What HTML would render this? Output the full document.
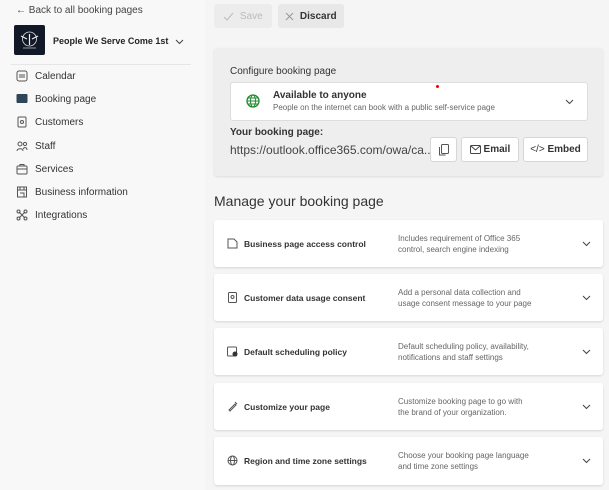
<!DOCTYPE html>
<html><head><style>
body{margin:0;width:609px;height:490px;background:#f5f5f5;font-family:"Liberation Sans",sans-serif;color:#242424;position:relative;overflow:hidden}
.a{position:absolute}
.nav{left:16px;font-size:10px;color:#333;display:flex;align-items:center}
.nav svg{width:12px;height:12px;margin-right:7px}
.btn{position:absolute;background:#e8e8e8;border-radius:3px;font-size:10px;display:flex;align-items:center;justify-content:center}
.card{position:absolute;left:214px;width:389px;background:#fff;border-radius:3px;box-shadow:0 1px 2px rgba(0,0,0,.13)}
.card .t{position:absolute;left:30px;font-size:8.5px;font-weight:bold;color:#333}
.card .d{position:absolute;left:184px;font-size:8px;color:#666;line-height:11px}
.card .ic{position:absolute;left:13px;width:11px;height:11px}
.chev{position:absolute;right:12px;width:9px;height:6px}
.wb{position:absolute;background:#fff;border:1px solid #d6d6d6;border-radius:3px;font-size:10px;font-weight:bold;display:flex;align-items:center;justify-content:center;color:#333}
</style></head><body>
<div class="a" style="left:0;top:0;width:205px;height:490px;background:#f8f8f8"></div>
<div class="a" style="left:16px;top:5px;font-size:10px;color:#444">← Back to all booking pages</div>
<div class="a" style="left:14px;top:25px;width:31px;height:30px;background:#111827;border-radius:2px">
<svg width="31" height="30" viewBox="0 0 31 30"><circle cx="15.5" cy="14" r="7" fill="none" stroke="#ddd" stroke-width="0.8"/><path d="M7 11l6 3M24 11l-6 3M15.5 9v11" stroke="#eee" stroke-width="1.2"/><path d="M9 23h13" stroke="#bbb" stroke-width="0.8"/></svg></div>
<div class="a" style="left:53px;top:36px;font-size:9px;font-weight:bold;white-space:nowrap">People We Serve Come 1st</div>
<svg class="a" style="left:175px;top:39px" width="9" height="6"><path d="M1 1l3.5 3.5L8 1" stroke="#444" fill="none"/></svg>
<div class="a" style="left:11px;top:64px;width:180px;height:1px;background:#e6e6e6"></div>
<div class="a nav" style="top:70px"><svg viewBox="0 0 12 12"><rect x="1" y="1" width="10" height="10" rx="2" fill="none" stroke="#555"/><path d="M3 5h6M3 7h6" stroke="#555"/></svg>Calendar</div>
<div class="a nav" style="top:93px"><svg viewBox="0 0 12 12"><rect x="0.5" y="1" width="11" height="9" rx="1" fill="#2f4659"/></svg>Booking page</div>
<div class="a nav" style="top:116px"><svg viewBox="0 0 12 12"><rect x="2" y="1" width="8" height="10" rx="1" fill="none" stroke="#555"/><circle cx="6" cy="6" r="1.5" fill="none" stroke="#555"/></svg>Customers</div>
<div class="a nav" style="top:140px"><svg viewBox="0 0 12 12"><circle cx="4" cy="4" r="2" fill="none" stroke="#555"/><circle cx="9" cy="4" r="1.6" fill="none" stroke="#555"/><path d="M1 11c0-3 6-3 6 0M7 9c1-2 4-2 4 1" fill="none" stroke="#555"/></svg>Staff</div>
<div class="a nav" style="top:163px"><svg viewBox="0 0 12 12"><rect x="1" y="3" width="10" height="8" rx="1" fill="none" stroke="#555"/><path d="M4 3V1.5h4V3M1 6h10" fill="none" stroke="#555"/></svg>Services</div>
<div class="a nav" style="top:186px"><svg viewBox="0 0 12 12"><rect x="1.5" y="1" width="9" height="10" fill="none" stroke="#555"/><path d="M1.5 4h9M4 1v3M8 1v3M4 7h4v4" fill="none" stroke="#555"/></svg>Business information</div>
<div class="a nav" style="top:209px"><svg viewBox="0 0 12 12"><path d="M3 3l6 6M9 3l-6 6" stroke="#555"/><circle cx="2.5" cy="2.5" r="1.5" fill="none" stroke="#555"/><circle cx="9.5" cy="2.5" r="1.5" fill="none" stroke="#555"/><circle cx="2.5" cy="9.5" r="1.5" fill="none" stroke="#555"/><circle cx="9.5" cy="9.5" r="1.5" fill="none" stroke="#555"/></svg>Integrations</div>

<div class="btn" style="left:214px;top:4px;width:58px;height:24px;background:#ececec;color:#bbb"><svg width="11" height="9"><path d="M1 5l3 3 6-7" stroke="#bbb" fill="none"/></svg>&nbsp; Save</div>
<div class="btn" style="left:278px;top:4px;width:66px;height:24px;font-weight:bold;color:#333"><svg width="9" height="9"><path d="M1 1l7 7M8 1L1 8" stroke="#999"/></svg>&nbsp; Discard</div>

<div class="a" style="left:214px;top:48px;width:389px;height:128px;background:#eeeeee;border-radius:3px;box-shadow:0 1px 2px rgba(0,0,0,.1)"></div>
<div class="a" style="left:230px;top:66px;font-size:10px;color:#333">Configure booking page</div>
<div class="a" style="left:230px;top:82px;width:356px;height:37px;background:#fff;border:1px solid #ddd;border-radius:3px"></div>
<svg class="a" style="left:246px;top:94px" width="14" height="14" viewBox="0 0 14 14"><circle cx="7" cy="7" r="6" fill="none" stroke="#1e8a2e" stroke-width="1.3"/><ellipse cx="7" cy="7" rx="2.5" ry="6" fill="none" stroke="#1e8a2e"/><path d="M1 7h12M2 4h10M2 10h10" stroke="#1e8a2e"/></svg>
<div class="a" style="left:273px;top:90px;font-size:10px;font-weight:bold;color:#333">Available to anyone</div>
<div class="a" style="left:273px;top:103px;font-size:8px;color:#666">People on the internet can book with a public self-service page</div>
<div class="a" style="left:436px;top:85px;width:3px;height:3px;background:#e00;border-radius:50%"></div>
<svg class="a" style="left:565px;top:99px" width="9" height="6"><path d="M1 1l3.5 3.5L8 1" stroke="#444" fill="none"/></svg>
<div class="a" style="left:230px;top:127px;font-size:10px;font-weight:bold;color:#333">Your booking page:</div>
<div class="a" style="left:230px;top:143px;font-size:12px;color:#444;width:200px;white-space:nowrap">https://outlook.office365.com/owa/ca...</div>
<div class="wb" style="left:430px;top:137px;width:25px;height:23px"><svg width="10" height="12"><rect x="2.5" y="0.5" width="7" height="9" rx="1" fill="none" stroke="#555"/><path d="M0.5 3v8h6" fill="none" stroke="#555"/></svg></div>
<div class="wb" style="left:461px;top:137px;width:56px;height:23px"><svg width="11" height="9"><rect x="0.5" y="0.5" width="10" height="8" rx="1" fill="none" stroke="#444"/><path d="M1 1l4.5 4L10 1" fill="none" stroke="#444"/></svg>&nbsp;Email</div>
<div class="wb" style="left:523px;top:137px;width:63px;height:23px"><span style="font-weight:normal">&lt;/&gt;</span>&nbsp;Embed</div>

<div class="a" style="left:214px;top:193px;font-size:14px;color:#333">Manage your booking page</div>

<div class="card" style="top:220px;height:47px"><svg class="ic" style="top:18px" viewBox="0 0 11 11"><path d="M1 1h6l3 3v6H1z" fill="none" stroke="#555"/></svg><div class="t" style="top:19px">Business page access control</div><div class="d" style="top:13px">Includes requirement of Office 365<br>control, search engine indexing</div><svg class="chev" style="top:21px"><path d="M1 1l3.5 3.5L8 1" stroke="#444" fill="none"/></svg></div>
<div class="card" style="top:274px;height:47px"><svg class="ic" style="top:18px" viewBox="0 0 11 11"><rect x="1.5" y="0.5" width="8" height="10" rx="1" fill="none" stroke="#555"/><circle cx="5.5" cy="5" r="1.5" fill="none" stroke="#555"/></svg><div class="t" style="top:19px">Customer data usage consent</div><div class="d" style="top:13px">Add a personal data collection and<br>usage consent message to your page</div><svg class="chev" style="top:21px"><path d="M1 1l3.5 3.5L8 1" stroke="#444" fill="none"/></svg></div>
<div class="card" style="top:328px;height:47px"><svg class="ic" style="top:18px" viewBox="0 0 11 11"><rect x="0.5" y="1" width="9" height="9" rx="1" fill="none" stroke="#555"/><circle cx="8" cy="8" r="2.5" fill="#333"/></svg><div class="t" style="top:19px">Default scheduling policy</div><div class="d" style="top:13px">Default scheduling policy, availability,<br>notifications and staff settings</div><svg class="chev" style="top:21px"><path d="M1 1l3.5 3.5L8 1" stroke="#444" fill="none"/></svg></div>
<div class="card" style="top:383px;height:47px"><svg class="ic" style="top:18px" viewBox="0 0 11 11"><path d="M2 9l6-6 1 1-6 6zM8 1l2 2" fill="none" stroke="#555"/></svg><div class="t" style="top:19px">Customize your page</div><div class="d" style="top:13px">Customize booking page to go with<br>the brand of your organization.</div><svg class="chev" style="top:21px"><path d="M1 1l3.5 3.5L8 1" stroke="#444" fill="none"/></svg></div>
<div class="card" style="top:437px;height:48px"><svg class="ic" style="top:18px" viewBox="0 0 11 11"><circle cx="5.5" cy="5.5" r="4.5" fill="none" stroke="#555"/><ellipse cx="5.5" cy="5.5" rx="2" ry="4.5" fill="none" stroke="#555"/><path d="M1 5.5h9" stroke="#555"/></svg><div class="t" style="top:19px">Region and time zone settings</div><div class="d" style="top:13px">Choose your booking page language<br>and time zone settings</div><svg class="chev" style="top:21px"><path d="M1 1l3.5 3.5L8 1" stroke="#444" fill="none"/></svg></div>
</body></html>
